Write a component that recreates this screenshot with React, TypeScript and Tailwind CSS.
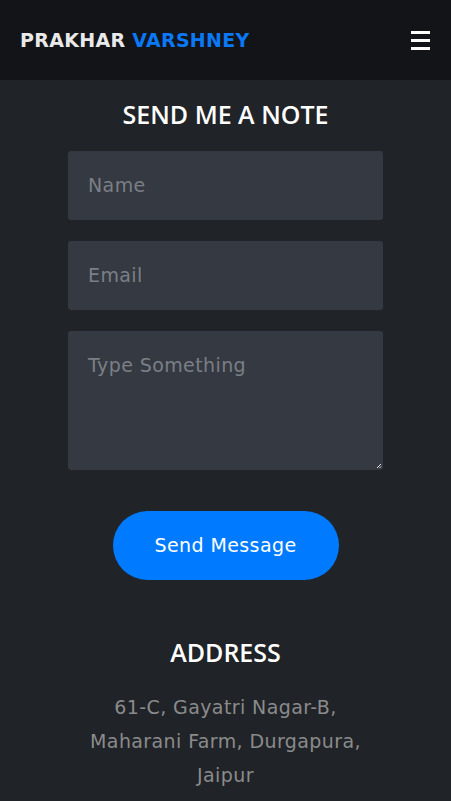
import React from "react";

const body = { fontFamily: '"DejaVu Sans", sans-serif' };

export default function App() {
  return (
    <div className="min-h-[801px] w-full bg-[#202328]" style={{ fontFamily: '"Open Sans", sans-serif' }}>
      <header className="flex h-[80px] items-center justify-between bg-[#121418] pl-[20px] pr-[21px]">
        <div className="text-[19px] font-extrabold tracking-[0.3px] text-[#e9e9e9]" style={{ fontFamily: '"DejaVu Sans", sans-serif' }}>
          PRAKHAR <span className="text-[#0b78f5]">VARSHNEY</span>
        </div>
        <div className="flex w-[19px] flex-col gap-[5px]">
          <div className="h-[3px] bg-white" />
          <div className="h-[3px] bg-white" />
          <div className="h-[3px] bg-white" />
        </div>
      </header>
      <main className="flex flex-col items-center">
        <h2 className="mt-[16px] text-[25px] font-semibold leading-[36px] text-white">SEND ME A NOTE</h2>
        <div className="mt-[19px] flex w-[315px] flex-col gap-[21px] tracking-[0.4px]" style={body}>
          <div className="flex h-[69px] items-center rounded-[3px] bg-[#353942] px-[20px] text-[19px] text-[#7b7f86]">Name</div>
          <div className="flex h-[69px] items-center rounded-[3px] bg-[#353942] px-[20px] text-[19px] text-[#7b7f86]">Email</div>
          <div className="relative h-[139px] rounded-[3px] bg-[#353942] px-[20px] pt-[19px] text-[19px] leading-[30px] text-[#7b7f86]">
            Type Something
            <svg className="absolute bottom-[1px] right-[1px]" width="6" height="6" viewBox="0 0 6 6">
              <path d="M5 1L1 5M5 3.5L3.5 5" stroke="#e5e5e5" strokeWidth="1" />
            </svg>
          </div>
        </div>
        <button className="mt-[41px] h-[69px] w-[226px] rounded-full bg-[#007bff] text-[19px] tracking-[0.4px] text-white" style={body}>Send Message</button>
        <h3 className="mt-[54px] text-[25px] font-semibold leading-[36px] text-white">ADDRESS</h3>
        <p className="mt-[20px] text-center text-[19px] leading-[34px] tracking-[0.4px] text-[#8b8b8b]" style={body}>
          61-C, Gayatri Nagar-B,
          <br />
          Maharani Farm, Durgapura,
          <br />
          Jaipur
        </p>
      </main>
    </div>
  );
}
